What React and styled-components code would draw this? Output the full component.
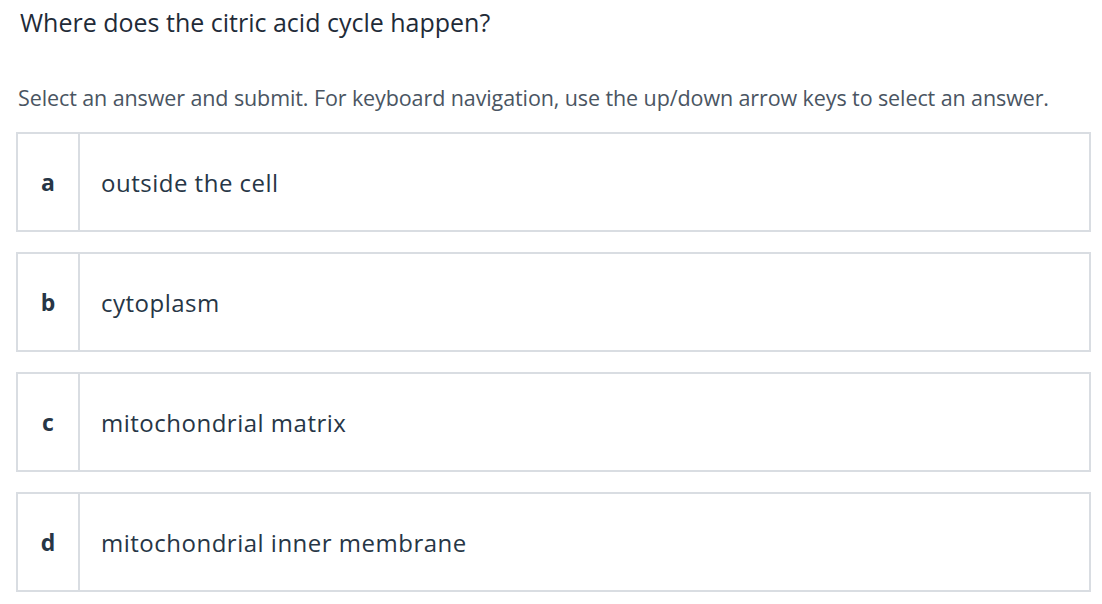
import React from 'react'
import styled, { createGlobalStyle } from 'styled-components'

const GlobalStyle = createGlobalStyle`
  html, body {
    margin: 0;
    padding: 0;
    background: #ffffff;
  }
  body {
    font-family: "Open Sans", Lato, sans-serif;
    -webkit-font-smoothing: antialiased;
  }
`

const Page = styled.div`
  padding: 5px 11px 0 16px;
`

const Question = styled.h1`
  margin: 0 0 0 4px;
  font-size: 25px;
  line-height: 34px;
  font-weight: 400;
  color: #1f2b38;
`

const Instructions = styled.p`
  margin: 44px 0 0 2px;
  font-size: 21.5px;
  line-height: 30px;
  letter-spacing: -0.1px;
  color: #4a5562;
`

const Options = styled.div`
  margin-top: 19px;
  display: flex;
  flex-direction: column;
  gap: 20px;
`

const Option = styled.div`
  display: flex;
  height: 100px;
  box-sizing: border-box;
  border: 2px solid #d9dde2;
  background: #fff;
  cursor: pointer;
`

const Letter = styled.div`
  width: 60px;
  flex-shrink: 0;
  display: flex;
  align-items: center;
  justify-content: center;
  border-right: 2px solid #d9dde2;
  font-size: 23px;
  font-weight: 700;
  color: #273646;
`

const Label = styled.div`
  display: flex;
  align-items: center;
  padding-left: 21px;
  font-size: 24px;
  letter-spacing: 0.5px;
  color: #273646;
`

const answers = [
  { key: 'a', text: 'outside the cell' },
  { key: 'b', text: 'cytoplasm' },
  { key: 'c', text: 'mitochondrial matrix' },
  { key: 'd', text: 'mitochondrial inner membrane' },
]

const App = () => {
  return (
    <>
      <GlobalStyle />
      <Page>
        <Question>Where does the citric acid cycle happen?</Question>
        <Instructions>
          Select an answer and submit. For keyboard navigation, use the up/down arrow keys to select an answer.
        </Instructions>
        <Options role="radiogroup">
          {answers.map((a) => (
            <Option key={a.key} role="radio" aria-checked="false" tabIndex={0}>
              <Letter>{a.key}</Letter>
              <Label>{a.text}</Label>
            </Option>
          ))}
        </Options>
      </Page>
    </>
  )
}

export default App
